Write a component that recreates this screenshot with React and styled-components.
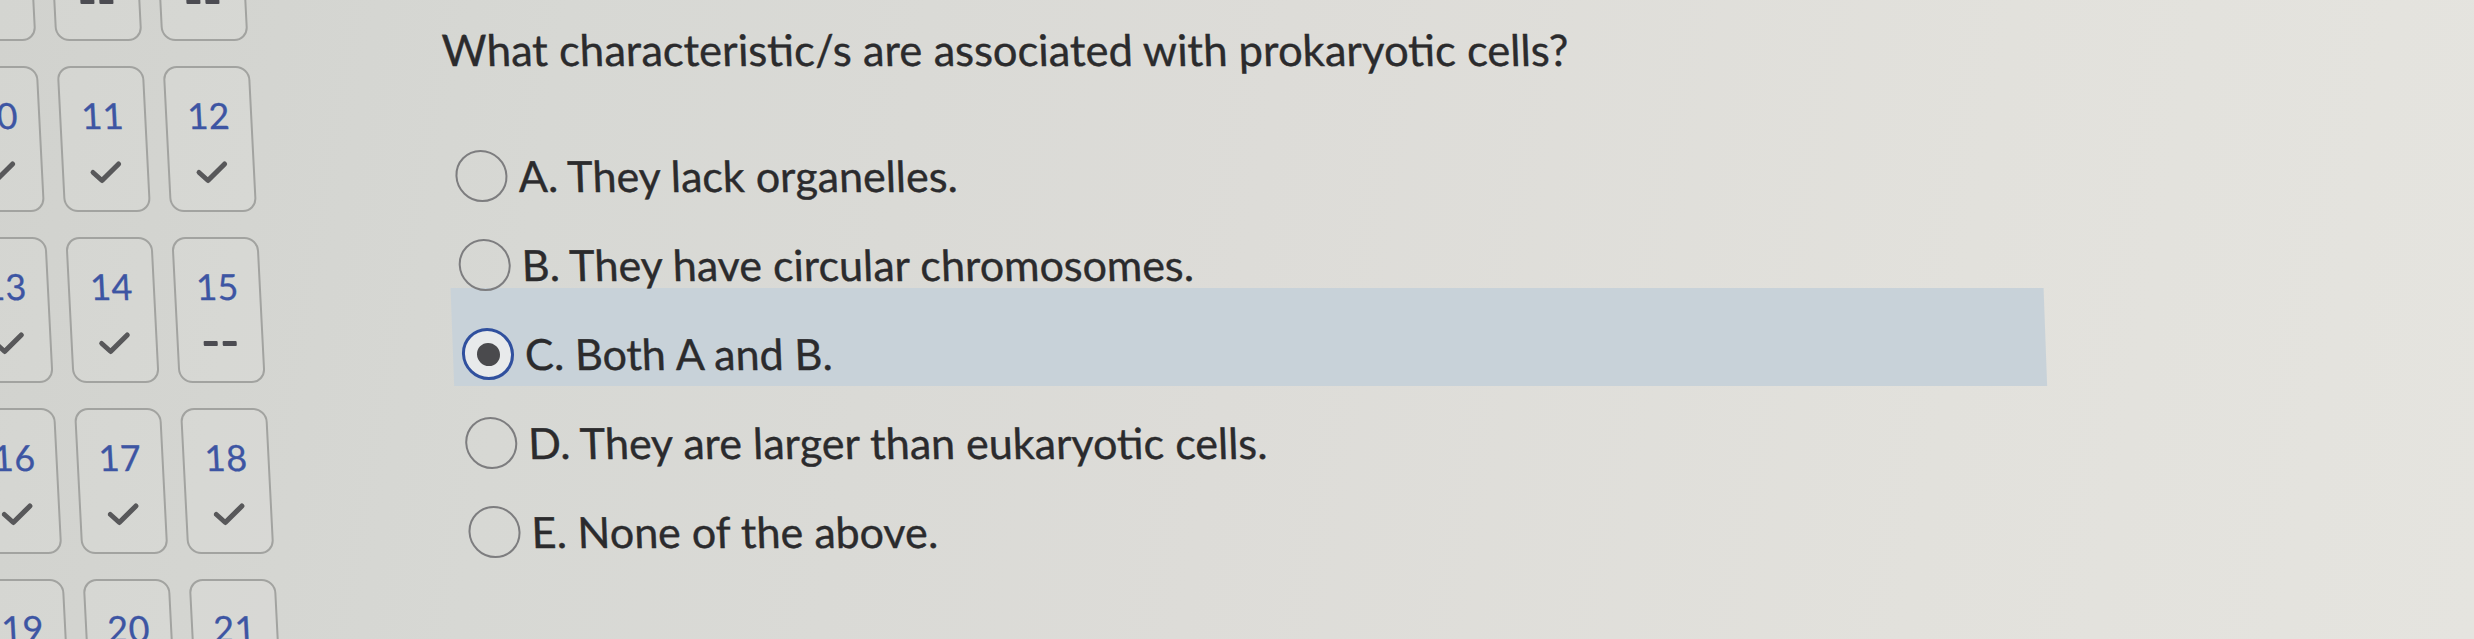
import React from 'react';
import styled, { createGlobalStyle } from 'styled-components';

const GlobalStyle = createGlobalStyle`
  html, body {
    margin: 0;
    padding: 0;
  }
  body {
    width: 2474px;
    height: 639px;
    overflow: hidden;
    font-family: Lato, "Noto Sans", sans-serif;
    background: #dcdcd8;
  }
`;

const Page = styled.div`
  display: flex;
  width: 2474px;
  height: 639px;
  overflow: hidden;
  background: linear-gradient(100deg, #d1d2ce 0%, #d7d8d4 22%, #dddcd8 50%, #e2e1dc 78%, #e5e4df 100%);
`;

const Sidebar = styled.nav`
  flex: 0 0 340px;
  height: 100%;
  overflow: hidden;
`;

const TileGrid = styled.div`
  display: grid;
  grid-template-columns: repeat(4, 87px);
  grid-auto-rows: 146px;
  column-gap: 19px;
  row-gap: 25px;
  margin-left: -58px;
  margin-top: -105px;
  transform: skewX(2.9deg);
  transform-origin: 0 0;
`;

const Tile = styled.div`
  box-sizing: border-box;
  border: 2px solid #a2a3a0;
  border-radius: 14px;
  background: rgba(255, 255, 255, 0.07);
  display: flex;
  flex-direction: column;
  align-items: center;
  padding-top: 29px;
`;

const Num = styled.span`
  font-family: Lato, sans-serif;
  font-size: 36px;
  line-height: 36px;
  height: 36px;
  color: #3d55a3;
  letter-spacing: 0.5px;
  -webkit-text-stroke: 0.3px #3d55a3;
`;

const Status = styled.div`
  height: 24px;
  margin-top: 27px;
  display: flex;
  align-items: center;
  justify-content: center;
`;

const Bars = styled.div`
  display: flex;
  gap: 5px;
`;

const Bar = styled.span`
  width: 14px;
  height: 5px;
  background: #4c4c52;
  border-radius: 1px;
`;

const Check = () => (
  <svg width="32" height="24" viewBox="0 0 32 24" aria-hidden="true">
    <path d="M3 12.5 L11.5 20.5 L29 4" fill="none" stroke="#58585a" strokeWidth="5" strokeLinecap="round" strokeLinejoin="round" />
  </svg>
);

const Main = styled.main`
  flex: 1;
  box-sizing: border-box;
  padding-left: 100px;
  padding-top: 19px;
  transform: skewX(2.1deg);
  transform-origin: 0 0;
`;

const Question = styled.h1`
  margin: 0;
  font-family: Lato, sans-serif;
  font-weight: 400;
  font-size: 43.5px;
  line-height: 60px;
  color: #2b2b2d;
  -webkit-text-stroke: 0.4px #2b2b2d;
`;

const OptionList = styled.div`
  display: flex;
  flex-direction: column;
  gap: 37px;
  margin-top: 71px;
  width: 1593px;
`;

const Option = styled.label`
  position: relative;
  display: flex;
  align-items: center;
  height: 52px;
  padding-left: 9px;
  gap: 11px;
  cursor: pointer;

  &::before {
    content: '';
    display: ${(p) => (p.$selected ? 'block' : 'none')};
    position: absolute;
    left: 0;
    right: 0;
    top: -40px;
    bottom: -6px;
    background: #c8d2d9;
    z-index: 0;
  }
`;

const Radio = styled.span`
  position: relative;
  z-index: 1;
  box-sizing: border-box;
  flex: 0 0 52px;
  width: 52px;
  height: 52px;
  border-radius: 50%;
  border: ${(p) => (p.$selected ? '3.5px solid #30509e' : '2.5px solid #7d7d7f')};
  background: ${(p) => (p.$selected ? '#e8eaeb' : 'transparent')};
  display: flex;
  align-items: center;
  justify-content: center;
`;

const Dot = styled.span`
  width: 23px;
  height: 23px;
  border-radius: 50%;
  background: #4a4a4d;
`;

const Label = styled.span`
  position: relative;
  z-index: 1;
  font-family: Lato, sans-serif;
  font-size: 43px;
  line-height: 52px;
  color: #2b2b2d;
  -webkit-text-stroke: 0.4px #2b2b2d;
`;

const tiles = [
  { n: 7, s: 'none' }, { n: 8, s: 'dash' }, { n: 9, s: 'dash' }, { n: 0, s: 'none', hidden: true },
  { n: 10, s: 'check' }, { n: 11, s: 'check' }, { n: 12, s: 'check' }, { n: 0, s: 'none', hidden: true },
  { n: 13, s: 'check' }, { n: 14, s: 'check' }, { n: 15, s: 'dash' }, { n: 0, s: 'none', hidden: true },
  { n: 16, s: 'check' }, { n: 17, s: 'check' }, { n: 18, s: 'check' }, { n: 0, s: 'none', hidden: true },
  { n: 19, s: 'none' }, { n: 20, s: 'none' }, { n: 21, s: 'none' }, { n: 0, s: 'none', hidden: true },
];

const options = [
  { id: 'a', text: 'A. They lack organelles.' },
  { id: 'b', text: 'B. They have circular chromosomes.' },
  { id: 'c', text: 'C. Both A and B.', selected: true },
  { id: 'd', text: 'D. They are larger than eukaryotic cells.' },
  { id: 'e', text: 'E. None of the above.' },
];

export default function App() {
  return (
    <>
      <GlobalStyle />
      <Page>
        <Sidebar>
          <TileGrid>
            {tiles.map((t, i) =>
              t.hidden ? (
                <div key={i} />
              ) : (
                <Tile key={i}>
                  <Num>{t.n}</Num>
                  <Status>
                    {t.s === 'check' && <Check />}
                    {t.s === 'dash' && (
                      <Bars>
                        <Bar />
                        <Bar />
                      </Bars>
                    )}
                  </Status>
                </Tile>
              )
            )}
          </TileGrid>
        </Sidebar>
        <Main>
          <Question>What characteristic/s are associated with prokaryotic cells?</Question>
          <OptionList>
            {options.map((o) => (
              <Option key={o.id} $selected={o.selected}>
                <Radio $selected={o.selected}>{o.selected && <Dot />}</Radio>
                <Label>{o.text}</Label>
              </Option>
            ))}
          </OptionList>
        </Main>
      </Page>
    </>
  );
}
